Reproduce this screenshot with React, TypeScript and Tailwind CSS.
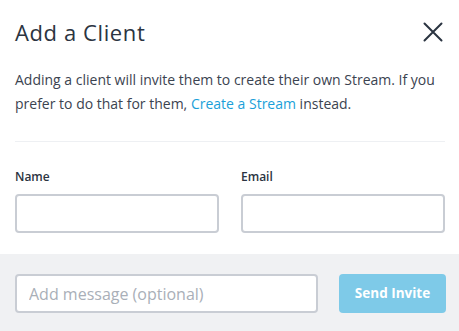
import React from "react";

const CloseIcon = () => (
  <svg width="20" height="20" viewBox="0 0 20 20" fill="none" stroke="#2b3441" strokeWidth="2" strokeLinecap="round">
    <path d="M1.5 1.5 L18.5 18.5 M18.5 1.5 L1.5 18.5" />
  </svg>
);

const App = () => {
  return (
    <div className="w-[459px] h-[331px] bg-white font-['Open_Sans',sans-serif] flex flex-col">
      <div className="pl-[15px] pr-[14px] pt-[17px]">
        <div className="flex items-center justify-between h-[30px]">
          <h2 className="text-[22px] leading-[30px] tracking-[0.6px] text-[#2b3441]">Add a Client</h2>
          <button className="mr-[2px]">
            <CloseIcon />
          </button>
        </div>
        <p className="mt-[21px] text-[14px] leading-[24px] text-[#3b4350]">
          Adding a client will invite them to create their own Stream. If you prefer to do that for them,{" "}
          <a className="text-[#1a9fd9]">Create a Stream</a> instead.
        </p>
        <div className="mt-[25px] h-px bg-[#eef0f3]" />
        <div className="mt-[27px] flex gap-[22px] pb-[21px]">
          <label className="flex-1 min-w-0 flex flex-col">
            <span className="text-[12px] leading-[16px] font-semibold text-[#2b3441]">Name</span>
            <input className="mt-[9px] w-full min-w-0 h-[39px] rounded-[4px] border-2 border-[#c9cdd4] bg-white px-3 outline-none" />
          </label>
          <label className="flex-1 min-w-0 flex flex-col">
            <span className="text-[12px] leading-[16px] font-semibold text-[#2b3441]">Email</span>
            <input className="mt-[9px] w-full min-w-0 h-[39px] rounded-[4px] border-2 border-[#c9cdd4] bg-white px-3 outline-none" />
          </label>
        </div>
      </div>
      <div className="flex-1 bg-[#f0f1f3] pl-[15px] pr-[13px] pt-[20px] flex gap-[21px] items-start">
        <input
          placeholder="Add message (optional)"
          className="w-[303px] min-w-0 h-[39px] rounded-[4px] border-2 border-[#c9cdd4] bg-white pl-[12px] text-[16px] text-[#2b3441] placeholder:text-[#a9afb8] outline-none"
        />
        <button className="w-[107px] h-[39px] rounded-[4px] bg-[#7ecae8] text-white text-[13.5px] font-bold">
          Send Invite
        </button>
      </div>
    </div>
  );
};

export default App;
